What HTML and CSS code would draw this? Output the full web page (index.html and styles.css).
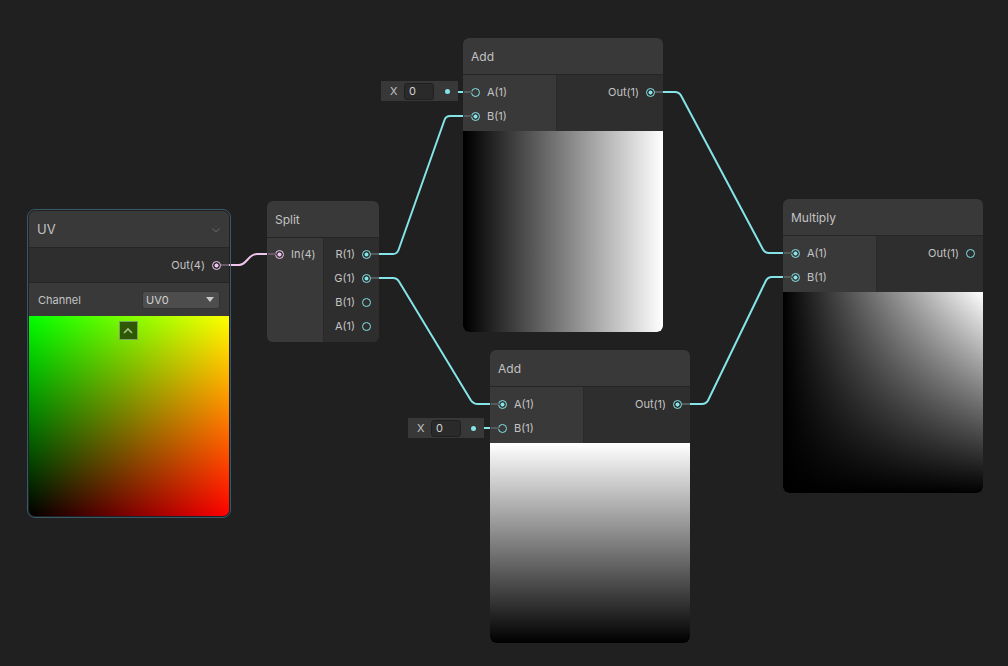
FILE: index.html
```html
<!DOCTYPE html>
<html>
<head>
<meta charset="utf-8">
<link rel="stylesheet" href="styles.css">
</head>
<body>
<div class="canvas">
  <svg class="wires" width="1008" height="666" viewBox="0 0 1008 666">
    <g fill="none" stroke-width="2" stroke-linejoin="round" stroke-linecap="round">
      <path class="w-pink" d="M229,265 H239 C247,265 248,254 257,254 H267"/>
      <path class="w-cyan" d="M379,254 H393 Q397,254 398.5,250 L444.5,120 Q446,116 450,116 H463"/>
      <path class="w-cyan" d="M379,278 H393 Q397,278 399,281.5 L471,400.5 Q473.5,404 478,404 H490"/>
      <path class="w-cyan" d="M663,92 H675 Q679,92 681,95.5 L763,249.5 Q765,253 769,253 H783"/>
      <path class="w-cyan" d="M690,404 H702 Q706,404 708,400.5 L766,280.5 Q768,277 772,277 H783"/>
      <path class="w-cyan" d="M451,92 H463"/>
      <path class="w-cyan" d="M478,428 H490"/>
    </g>
  </svg>

  <!-- UV node -->
  <div class="node n-uv">
    <div class="hdr hdr-uv">
      <span>UV</span>
      <svg class="chev" width="8" height="5" viewBox="0 0 8 5"><path d="M0.5,0.5 L4,4 L7.5,0.5" fill="none" stroke="#5a5a5a" stroke-width="1.2"/></svg>
    </div>
    <div class="uv-out">
      <span class="lbl">Out(4)</span>
      <span class="port out pink on"></span>
    </div>
    <div class="uv-ctrl">
      <span class="lbl">Channel</span>
      <div class="dd"><span>UV0</span><span class="tri"></span></div>
    </div>
    <div class="preview pv-uv">
      <div class="collapse">
        <svg width="10" height="6" viewBox="0 0 10 6"><path d="M1,5 L5,1 L9,5" fill="none" stroke="#a9c58f" stroke-width="1.6"/></svg>
      </div>
    </div>
  </div>

  <!-- Split node -->
  <div class="node n-split">
    <div class="hdr">Split</div>
    <div class="body body-split">
      <div class="ins ins-split">
        <div class="row"><span class="port in pink on"></span><span class="lbl">In(4)</span></div>
      </div>
      <div class="outs">
        <div class="row out-row"><span class="lbl">R(1)</span><span class="port out on"></span></div>
        <div class="row out-row"><span class="lbl">G(1)</span><span class="port out on"></span></div>
        <div class="row out-row"><span class="lbl">B(1)</span><span class="port out"></span></div>
        <div class="row out-row"><span class="lbl">A(1)</span><span class="port out"></span></div>
      </div>
    </div>
  </div>

  <!-- Inline value fields -->
  <div class="inl inl-top"><span class="x">X</span><span class="fld">0</span><span class="dot"></span></div>
  <div class="inl inl-bot"><span class="x">X</span><span class="fld">0</span><span class="dot"></span></div>

  <!-- Add (top) -->
  <div class="node n-add1">
    <div class="hdr">Add</div>
    <div class="body">
      <div class="ins">
        <div class="row"><span class="port in on hollow"></span><span class="lbl">A(1)</span></div>
        <div class="row"><span class="port in on"></span><span class="lbl">B(1)</span></div>
      </div>
      <div class="outs">
        <div class="row out-row"><span class="lbl">Out(1)</span><span class="port out on"></span></div>
      </div>
    </div>
    <div class="preview pv-x"></div>
  </div>

  <!-- Add (bottom) -->
  <div class="node n-add2">
    <div class="hdr">Add</div>
    <div class="body">
      <div class="ins">
        <div class="row"><span class="port in on"></span><span class="lbl">A(1)</span></div>
        <div class="row"><span class="port in on hollow"></span><span class="lbl">B(1)</span></div>
      </div>
      <div class="outs">
        <div class="row out-row"><span class="lbl">Out(1)</span><span class="port out on"></span></div>
      </div>
    </div>
    <div class="preview pv-y"></div>
  </div>

  <!-- Multiply -->
  <div class="node n-mul">
    <div class="hdr">Multiply</div>
    <div class="body">
      <div class="ins">
        <div class="row"><span class="port in on"></span><span class="lbl">A(1)</span></div>
        <div class="row"><span class="port in on"></span><span class="lbl">B(1)</span></div>
      </div>
      <div class="outs">
        <div class="row out-row"><span class="lbl">Out(1)</span><span class="port out"></span></div>
      </div>
    </div>
    <div class="preview pv-xy"></div>
  </div>
</div>
</body>
</html>
```

FILE: styles.css
```css
* { box-sizing: border-box; }

html, body {
  margin: 0;
  padding: 0;
  background: #202020;
}

body {
  font-family: Inter, "Noto Sans", "Liberation Sans", sans-serif;
  color: #c4c4c4;
}

.canvas {
  position: relative;
  width: 1008px;
  height: 666px;
  overflow: hidden;
  background: #202020;
}

.wires {
  position: absolute;
  left: 0;
  top: 0;
  z-index: 0;
}

.w-cyan { stroke: #84e4e7; }
.w-pink { stroke: #f0c4ec; }

/* ---------- nodes (free canvas positions) ---------- */
.node {
  position: absolute;
  z-index: 1;
  width: 200px;
  border-radius: 6px;
  background: #2e2e2e;
  overflow: hidden;
  display: flex;
  flex-direction: column;
}

.n-uv {
  left: 29px;
  top: 211px;
  overflow: visible;
  outline: 1px solid #36596b;
  outline-offset: 1px;
}
.n-split { left: 267px; top: 201px; width: 112px; }
.n-add1  { left: 463px; top: 38px; }
.n-add2  { left: 490px; top: 350px; }
.n-mul   { left: 783px; top: 199px; }

.hdr {
  height: 36px;
  flex: none;
  background: #393939;
  padding-left: 8px;
  display: flex;
  align-items: center;
  font-size: 12px;
  color: #c2c2c2;
  border-radius: 6px 6px 0 0;
}

.hdr-uv {
  font-size: 13px;
  justify-content: space-between;
  padding-right: 9px;
}
.chev { display: block; margin-top: 2px; }

.body {
  display: flex;
  height: 57px;
  flex: none;
  border-top: 1px solid #252525;
}

.body-split { height: 105px; }

.ins {
  width: 94px;
  flex: none;
  background: #393939;
  padding-top: 5px;
  border-right: 1px solid #2a2a2a;
}
.ins-split { width: 57px; padding-top: 4px; }

.outs {
  flex: 1;
  background: #2e2e2e;
  padding-top: 5px;
}
.body-split .outs { padding-top: 4px; }

.row {
  height: 24px;
  display: flex;
  align-items: center;
}
.out-row { justify-content: flex-end; }

.lbl {
  font-size: 11px;
  color: #c4c4c4;
  white-space: nowrap;
}

/* ---------- ports ---------- */
.port {
  position: relative;
  width: 9px;
  height: 9px;
  flex: none;
  border-radius: 50%;
  border: 1.5px solid #84e4e7;
  background: transparent;
}
.port.in  { margin-left: 8px; margin-right: 7px; }
.port.out { margin-left: 7px; margin-right: 8px; }

.port.on {
  background: radial-gradient(circle, #84e4e7 0 1.7px, transparent 2.3px);
}
.port.on.hollow { background: transparent; }
.port.pink { border-color: #f0c4ec; }
.port.pink.on {
  background: radial-gradient(circle, #f0c4ec 0 1.7px, transparent 2.3px);
}

/* grey stubs from a connected port to the node edge */
.port.on::before {
  content: "";
  position: absolute;
  top: 2.5px;
  width: 8px;
  height: 2px;
  background: #555a5a;
}
.port.in.on::before  { right: 7.5px; }
.port.out.on::before { left: 7.5px; }
.port.pink.on::before { background: #6a5a68; }

/* ---------- UV node body ---------- */
.uv-out {
  height: 35px;
  border-top: 1px solid #252525;
  background: #2e2e2e;
  display: flex;
  align-items: center;
  justify-content: flex-end;
}

.uv-ctrl {
  height: 34px;
  border-top: 1px solid #252525;
  background: #393939;
  display: flex;
  align-items: center;
  justify-content: space-between;
  padding: 0 9px 0 9px;
}

.dd {
  width: 78px;
  height: 18px;
  background: #4d4d4d;
  border: 1px solid #333;
  border-radius: 3px;
  display: flex;
  align-items: center;
  justify-content: space-between;
  padding: 0 5px 0 3px;
  font-size: 11px;
  color: #d2d2d2;
}

.tri {
  width: 0;
  height: 0;
  border-left: 4.5px solid transparent;
  border-right: 4.5px solid transparent;
  border-top: 5px solid #c8c8c8;
}

/* ---------- previews ---------- */
.preview {
  flex: none;
  height: 200px;
  border-radius: 0 0 6px 6px;
}
.n-add1 .preview, .n-mul .preview { height: 201px; }

.pv-uv {
  background:
    linear-gradient(to right, #000 0%, #ff0000 100%),
    linear-gradient(to top, #000 0%, #00ff00 100%);
  background-blend-mode: screen;
  display: flex;
  justify-content: center;
  padding-top: 5px;
  padding-right: 2px;
}

.collapse {
  width: 19px;
  height: 19px;
  background: #2f5805;
  border: 1px solid #7da35a;
  display: flex;
  align-items: center;
  justify-content: center;
}
.collapse svg { display: block; }

.pv-x { background: linear-gradient(to right, #000 0%, #050505 3%, #fff 100%); }
.pv-y { background: linear-gradient(to bottom, #fff 0%, #000 100%); }
.pv-xy {
  background:
    linear-gradient(to right, #000 0%, #fff 100%),
    linear-gradient(to top, #000 0%, #fff 100%);
  background-blend-mode: multiply;
}

/* ---------- inline value fields ---------- */
.inl {
  position: absolute;
  z-index: 1;
  height: 20px;
  background: #383838;
  display: flex;
  align-items: center;
  padding-left: 9px;
  font-size: 11px;
}
.inl-top { left: 381px; top: 81px; width: 77px; }
.inl-bot { left: 408px; top: 418px; width: 76px; }

.inl .x { color: #c4c4c4; width: 14px; }

.fld {
  width: 30px;
  height: 17px;
  background: #2a2a2a;
  border: 1px solid #1f1f1f;
  border-radius: 3px;
  padding-left: 4px;
  display: flex;
  align-items: center;
  color: #d2d2d2;
}

.dot {
  width: 5px;
  height: 5px;
  border-radius: 50%;
  background: #84e4e7;
  margin-left: auto;
  margin-right: 8px;
}
```
